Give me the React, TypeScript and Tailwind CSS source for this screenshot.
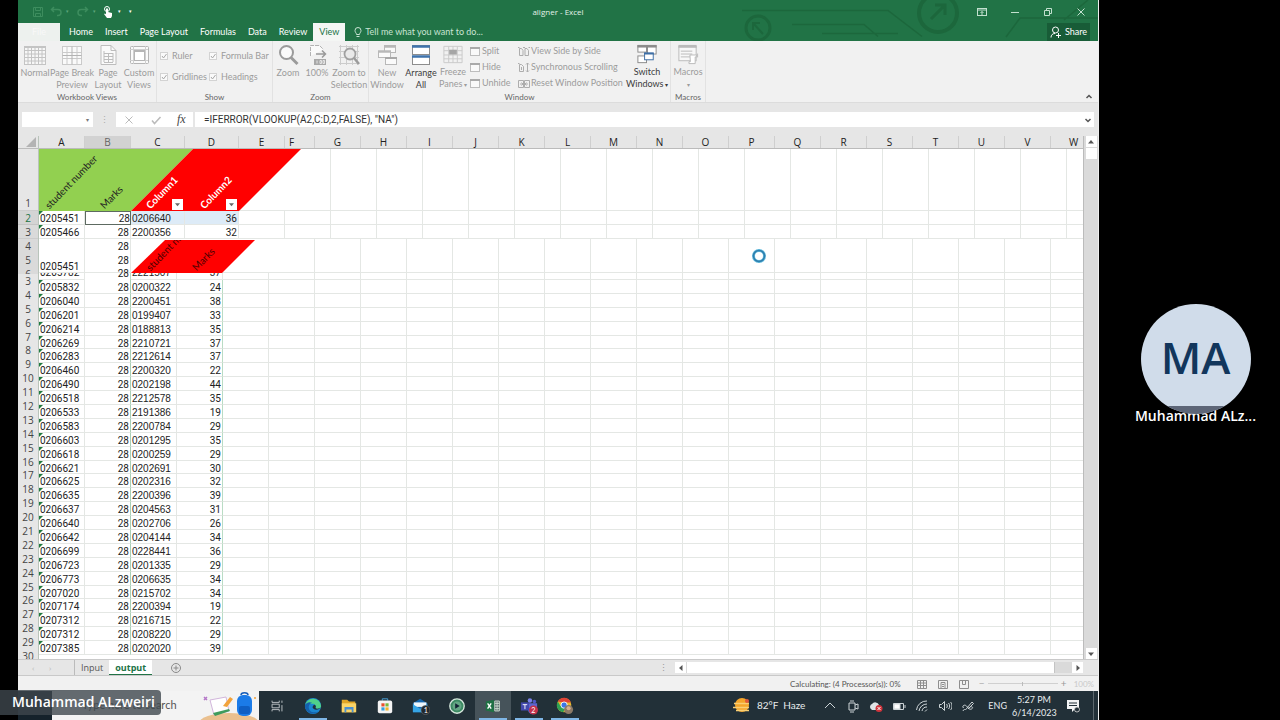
import React, { useState } from 'react';

const RIBBON_TABS = ['Home', 'Insert', 'Page Layout', 'Formulas', 'Data', 'Review', 'View'];

const COLUMNS = 'ABCDEFGHIJKLMNOPQRSTUVW'.split('');

// [student number, looked up mark, Column1, Column2]
const ROWS: [string, string, string, string][] = [
  ['0205832', '28', '0200322', '24'],
  ['0206040', '28', '2200451', '38'],
  ['0206201', '28', '0199407', '33'],
  ['0206214', '28', '0188813', '35'],
  ['0206269', '28', '2210721', '37'],
  ['0206283', '28', '2212614', '37'],
  ['0206460', '28', '2200320', '22'],
  ['0206490', '28', '0202198', '44'],
  ['0206518', '28', '2212578', '35'],
  ['0206533', '28', '2191386', '19'],
  ['0206583', '28', '2200784', '29'],
  ['0206603', '28', '0201295', '35'],
  ['0206618', '28', '0200259', '29'],
  ['0206621', '28', '0202691', '30'],
  ['0206625', '28', '0202316', '32'],
  ['0206635', '28', '2200396', '39'],
  ['0206637', '28', '0204563', '31'],
  ['0206640', '28', '0202706', '26'],
  ['0206642', '28', '0204144', '34'],
  ['0206699', '28', '0228441', '36'],
  ['0206723', '28', '0201335', '29'],
  ['0206773', '28', '0206635', '34'],
  ['0207020', '28', '0215702', '34'],
  ['0207174', '28', '2200394', '19'],
  ['0207312', '28', '0216715', '22'],
  ['0207312', '28', '0208220', '29'],
  ['0207385', '28', '0202020', '39'],
];

const CELL = 'shrink-0 overflow-hidden border-r border-b border-[#e4e7e4] px-px';

const headWidth = (i: number) => {
  if (i === 2 || i === 3) return 'w-[54px]';
  if (i === 5) return 'w-[30px]';
  return 'w-[46px]';
};

const Blank: React.FC<{ count: number }> = ({ count }) => (
  <>
    {Array.from({ length: count }, (_, i) => (
      <td key={i} className={`${CELL} w-[46px]`} />
    ))}
  </>
);

const ErrorMark = () => (
  <svg viewBox="0 0 4 4" className="absolute left-0 top-0 size-1"><path d="M0 0h4L0 4z" fill="#1f7a3f" /></svg>
);

/* ---------- ribbon drawings ---------- */

const Svg: React.FC<{ className?: string; box?: string; children: React.ReactNode }> = ({ className = 'w-6 h-6', box = '0 0 24 24', children }) => (
  <svg viewBox={box} className={className} fill="none" stroke="currentColor" strokeWidth="1">{children}</svg>
);

const NormalIcon = () => (
  <Svg className="w-6 h-6 text-[#c4c4c4]">
    <rect x="1.5" y="3.5" width="21" height="18" fill="#f7f7f7" />
    <path d="M1.5 7.5h21M1.5 11h21M1.5 14.500h21M1.500 18h21M5 3.500v18M8.500 3.500v18M12 3.500v18M15.500 3.500v18M19 3.500v18" />
    <path d="M1 4h22" strokeWidth="2" />
  </Svg>
);

const PageBreakIcon = () => (
  <Svg className="w-6 h-6 text-[#cacaca]">
    <rect x="2.5" y="3.5" width="19" height="18" fill="#fafafa" />
    <path d="M2.5 9.500h19M2.500 15.500h19M7 3.500v18M17 3.500v18" />
    <path d="M12 3.500v18M2.500 12.500h19" stroke="#b4b4b4" />
  </Svg>
);

const PageLayoutIcon = () => (
  <Svg className="w-6 h-6 text-[#bdbdbd]">
    <path d="M5 2.500h10l5 5v14H5z" fill="#fafafa" />
    <path d="M15 2.500v5h5M8 10.500h9M8 13.500h9M8 16.500h9M8 8v11M12.500 10v9M17 10v9M8 19.500h9" />
  </Svg>
);

const CustomViewsIcon = () => (
  <Svg className="w-6 h-6 text-[#b5b5b5]">
    <rect x="3.500" y="3.500" width="18" height="17" rx="1" fill="#fafafa" />
    <path d="M6.500 3v18M18.500 3v18M3 6.500h18M3 17.500h18" stroke="#cfcfcf" />
    <rect x="7.500" y="7.500" width="10" height="10" fill="#fff" />
    <path d="M7 8h11" strokeWidth="2" />
  </Svg>
);

const ZoomIcon = () => (
  <Svg className="w-6 h-6 text-[#9b9b9b]">
    <circle cx="10.500" cy="9.500" r="6.500" strokeWidth="2" fill="#fafafa" />
    <path d="M15 14.500l6.500 6.500" strokeWidth="3" />
  </Svg>
);

const HundredIcon = () => (
  <Svg className="w-6 h-6 text-[#b2b2b2]">
    <path d="M5.500 13V2.500h9l4 4" fill="#fafafa" strokeDasharray="4 1" />
    <path d="M11 11h9M17 7.500l3.500 3.500L17 14.500" stroke="#999" strokeWidth="1.500" />
    <rect x="9" y="16" width="12" height="6" fill="#a8a8a8" stroke="none" />
    <path d="M12 17.500v3M15 17.500h1.500v3H15zM18 17.500h1.500v3H18z" stroke="#f2f2f2" strokeWidth=".8" />
  </Svg>
);

const ZoomSelIcon = () => (
  <Svg className="w-6 h-6 text-[#cccccc]">
    <path d="M2 3.500h20M2 8.500h20M2 14.500h20M2 20.500h20M3.500 2v20M9.500 2v20M15.500 2v20M20.500 2v20" />
    <circle cx="13" cy="11" r="5.500" stroke="#a0a0a0" strokeWidth="1.800" fill="#e9e9e9" />
    <path d="M17 15l5 6" stroke="#9b9b9b" strokeWidth="2.500" />
  </Svg>
);

const NewWindowIcon = () => (
  <Svg className="w-6 h-6 text-[#b8b8b8]">
    <rect x="9.500" y="2.500" width="11" height="7" fill="#fafafa" />
    <path d="M9 3.500h12" strokeWidth="2.500" />
    <rect x="3.500" y="8.500" width="12" height="6" fill="#fafafa" />
    <path d="M3 8.500h13" strokeWidth="2.500" />
    <rect x="10.500" y="14.500" width="11" height="7" fill="#fafafa" />
    <path d="M10 15h12" strokeWidth="2" stroke="#a8a8a8" />
  </Svg>
);

const SwitchIcon = () => (
  <Svg className="w-6 h-6 text-[#8b8b8b]">
    <rect x="12.500" y="2.500" width="9" height="9" fill="#fff" />
    <rect x="2.500" y="2.500" width="9" height="7" fill="#fff" />
    <path d="M2 3.500h20" strokeWidth="2.500" />
    <rect x="2.500" y="13.500" width="9" height="7" fill="#fff" />
    <rect x="9.500" y="10.500" width="9" height="7" fill="#fff" stroke="#3d6ea5" />
    <path d="M9 11h10" strokeWidth="2" stroke="#3d6ea5" />
  </Svg>
);

const ArrangeIcon = () => (
  <Svg className="w-6 h-6 text-[#8d8d8d]">
    <rect x="3.500" y="2.500" width="17" height="9" fill="#fff" />
    <rect x="3.500" y="13.500" width="17" height="8" fill="#fff" />
    <path d="M3 3.500h18M3 13.500h18" stroke="#3f73ac" strokeWidth="2.500" />
  </Svg>
);

const FreezeIcon = () => (
  <Svg className="w-6 h-6 text-[#cacaca]">
    <path d="M2.500 3.500h19v17h-19zM2.500 8h19M2.500 12.500h19M2.500 16.500h19M7.500 3.500v17M16.500 3.500v17M12 3.500v17" />
    <rect x="8" y="7" width="8" height="5" fill="#a5a5a5" stroke="none" />
  </Svg>
);

const MacrosIcon = () => (
  <Svg className="w-6 h-6 text-[#bababa]">
    <rect x="2.500" y="3.500" width="18" height="15" fill="#f8f8f8" />
    <path d="M2 3.500h19" strokeWidth="3" />
    <path d="M4.500 8.500h12M4.500 11.500h12M4.500 14.500h12" />
    <path d="M14 12.500h7v2h-1.500v7H13v-2h1.500z" fill="#fff" />
    <path d="M22 11v4" />
  </Svg>
);

const PaneIcon = () => (
  <Svg className="h-[11px] w-3 text-[#bdbdbd]" box="0 0 12 11">
    <rect x="1.500" y="1.500" width="9" height="8" fill="#f9f9f9" />
    <path d="M1 2h10" strokeWidth="2" stroke="#a9a9a9" />
  </Svg>
);

const SideIcon = () => (
  <Svg className="h-[11px] w-3 text-[#adadad]" box="0 0 12 11">
    <path d="M0 1.500h1.500M1.500 2.500h2l1.500 2v5H1.500zM7 2.500h2l1.500 2v5H7zM5 1.500h2M10.500 1.500H12" />
  </Svg>
);

const SyncIcon = () => (
  <Svg className="h-[11px] w-3 text-[#adadad]" box="0 0 12 11">
    <path d="M0 1.500h1.500M1.500 2.500h2l2 2v5h-4zM3.500 5v3M9.500 1v9M8 2.500L9.500 1 11 2.500M8 8.500L9.500 10 11 8.500" />
  </Svg>
);

const ResetIcon = () => (
  <Svg className="h-[11px] w-3 text-[#adadad]" box="0 0 12 11">
    <path d="M.5 2.500h5v7h-5zM6.500 2.500h5v7h-5zM2 6h3M3.500 4.500L5 6 3.500 7.500M10 6H7M8.500 4.500L7 6l1.500 1.500" />
  </Svg>
);

const BigButton: React.FC<{ icon: React.ReactNode; lines: string[]; width: string; active?: boolean; arrow?: boolean }> = ({ icon, lines, width, active, arrow }) => (
  <button className={`${width} flex shrink-0 flex-col items-center text-[9px] leading-[12px] whitespace-nowrap ${active ? 'text-[#3c3c3c]' : 'text-[#9c9c9c]'}`}>
    {icon}
    {lines.map((l, i) => (
      <span key={l}>
        {l}
        {arrow && i === lines.length - 1 && <span className="text-[6px]"> ▾</span>}
      </span>
    ))}
  </button>
);

const SmallButton: React.FC<{ icon: React.ReactNode; label: string }> = ({ icon, label }) => (
  <button className="flex h-4 items-center gap-px text-[9px] whitespace-nowrap text-[#9c9c9c]">{icon}{label}</button>
);

const Group: React.FC<{ title: string; width: string; children: React.ReactNode }> = ({ title, width, children }) => (
  <section className={`${width} flex shrink-0 flex-col border-r border-[#e2e2e2]`}>
    <div className="flex h-[50px] shrink-0 pt-[2px]">{children}</div>
    <h2 className="shrink-0 text-center text-[8px] leading-[13px] text-[#666]">{title}</h2>
  </section>
);

const Tick: React.FC<{ label: string }> = ({ label }) => (
  <label className="flex h-[21px] items-center gap-1 text-[9px] whitespace-nowrap text-[#9c9c9c]">
    <span className="relative flex size-2">
      <input type="checkbox" defaultChecked className="size-2 appearance-none border border-[#d3d3d3] bg-[#fafafa]" />
      <svg viewBox="0 0 8 8" className="pointer-events-none absolute inset-0 size-2" fill="none" stroke="#a8a8a8"><path d="M2 4l1.500 2L6.500 2" /></svg>
    </span>
    {label}
  </label>
);

const TitleBar = () => (
  <div className="relative flex h-[23px] items-center text-[#5ea67b]">
    <div className="flex flex-1 items-center pl-[11px]">
      <button aria-label="Save" className="w-[21px] pl-[3px]"><Svg className="size-3 text-[#3d8d5e]" box="0 0 12 12"><path d="M1.500 1.500h9v9h-9zM3.500 1.500v3h5v-3M3.500 10.500v-3h5v3" /></Svg></button>
      <button aria-label="Undo" className="flex w-[27px] items-center gap-1"><Svg className="size-3 text-[#3d8d5e]" box="0 0 12 12"><path d="M4 1L1.500 3.500 4 6M1.500 3.500H8a3 3 0 010 6H7" strokeWidth="1.500" /></Svg><span className="text-[5px]">▾</span></button>
      <button aria-label="Redo" className="flex w-[25px] items-center gap-1"><Svg className="size-3 text-[#3d8d5e]" box="0 0 12 12"><path d="M8 1l2.500 2.500L8 6M10.500 3.500H4a3 3 0 000 6h1" strokeWidth="1.500" /></Svg><span className="text-[5px]">▾</span></button>
      <button aria-label="Touch mode" className="flex w-[27px] items-center gap-1 text-white">
        <svg viewBox="0 0 12 12" className="size-3" fill="currentColor"><circle cx="5" cy="3" r="2.500" fill="none" stroke="currentColor" /><path d="M4 2.500h2V6l4 1v3l-1 2H5L2 8l1-.5 1 .8z" /></svg>
        <span className="text-[5px]">▾</span>
      </button>
      <button aria-label="Customize" className="text-[5px] text-white">▾</button>
    </div>
    <h1 className="font-['Open_Sans',sans-serif] text-[8px] text-[#e4f2e9]">aligner - Excel</h1>
    <div className="flex flex-1 items-center justify-end gap-[21px] pr-[11px] text-[#c3e0cf]">
      <button aria-label="Ribbon options"><Svg className="size-3" box="0 0 12 12"><rect x="1.500" y="2.500" width="9" height="7" /><path d="M1 4h10M6 9V5.500M4.500 7L6 5.500 7.500 7" /></Svg></button>
      <button aria-label="Minimize"><Svg className="size-3" box="0 0 12 12"><path d="M2 6.500h8" /></Svg></button>
      <button aria-label="Restore"><Svg className="size-3" box="0 0 12 12"><path d="M2.500 4.500h5v5h-5zM4.500 4V2.500h5v5H8" /></Svg></button>
      <button aria-label="Close"><Svg className="size-3" box="0 0 12 12"><path d="M2.500 2.500l7 7M9.500 2.500l-7 7" /></Svg></button>
    </div>
  </div>
);

const TabBar: React.FC<{ tab: string; setTab: (t: string) => void }> = ({ tab, setTab }) => (
  <nav className="relative flex h-[18px] items-stretch text-[9px] whitespace-nowrap text-white">
    <button className="mr-[3px] w-[42px] bg-[#edf1ee] text-[#f8f8f8]">File</button>
    {RIBBON_TABS.map(t => (
      <button key={t} onClick={() => setTab(t)} className={t === tab ? 'bg-[#f4f6f4] px-[6px] text-[#217346]' : 'px-[6px]'}>{t}</button>
    ))}
    <label className="flex flex-1 items-center gap-[2px] pl-2 text-[#c9e3d3]">
      <Svg className="h-3 w-[10px]" box="0 0 10 12"><path d="M3.500 8.500C3.500 7 2 6.500 2 4.500a3 3 0 016 0c0 2-1.500 2.500-1.500 4zM3.500 10.500h3" /></Svg>
      <input className="w-40 bg-transparent outline-none placeholder:text-[#c9e3d3]" placeholder="Tell me what you want to do..." />
    </label>
    <button className="mr-2 flex w-[43px] items-center justify-center gap-1 bg-[#185c37]">
      <Svg className="h-3 w-[11px]" box="0 0 11 12"><circle cx="5.500" cy="4" r="3" /><path d="M1 11.500c0-2.500 1.500-4 4-4M6 9.500h5M8.500 7v5" /></Svg>
      Share
    </button>
  </nav>
);

// faint circuit pattern of the title area
const Circuit = () => (
  <svg viewBox="0 0 360 41" className="absolute right-0 top-0 h-[41px] w-[360px]" fill="none" stroke="#1c673c" strokeWidth="1.500">
    <path d="M4 10.500h146l34 26M54 24.500h72l14 12M84 33.500h76M268 37l14-19h78M326 20L350 0" />
    <circle cx="20" cy="28" r="12" strokeWidth="3" />
    <path d="M25 34L15 23M15 30v-7h7" strokeWidth="2" />
    <circle cx="200" cy="13" r="19" strokeWidth="4" />
    <path d="M193 19l14-14M197 5h10v10" strokeWidth="3" />
  </svg>
);

const Ribbon = () => (
  <div className="relative flex h-[62px] border-b border-[#dcdcdc] bg-[#f1f1f1]">
    <Group title="Workbook Views" width="w-[139px]">
      <BigButton icon={<NormalIcon />} lines={['Normal']} width="w-[34px]" />
      <BigButton icon={<PageBreakIcon />} lines={['Page Break', 'Preview']} width="w-10" />
      <BigButton icon={<PageLayoutIcon />} lines={['Page', 'Layout']} width="w-8" />
      <BigButton icon={<CustomViewsIcon />} lines={['Custom', 'Views']} width="w-[30px]" />
    </Group>
    <Group title="Show" width="w-[116px]">
      <div className="flex gap-[2px] pt-[2px] pl-[3px]">
        <div><Tick label="Ruler" /><Tick label="Gridlines" /></div>
        <div><Tick label="Formula Bar" /><Tick label="Headings" /></div>
      </div>
    </Group>
    <Group title="Zoom" width="w-[96px]">
      <BigButton icon={<ZoomIcon />} lines={['Zoom']} width="w-[30px]" />
      <BigButton icon={<HundredIcon />} lines={['100%']} width="w-7" />
      <BigButton icon={<ZoomSelIcon />} lines={['Zoom to', 'Selection']} width="w-9" />
    </Group>
    <Group title="Window" width="w-[302px]">
      <BigButton icon={<NewWindowIcon />} lines={['New', 'Window']} width="w-9" />
      <BigButton icon={<ArrangeIcon />} lines={['Arrange', 'All']} width="w-8" active />
      <BigButton icon={<FreezeIcon />} lines={['Freeze', 'Panes']} width="w-8" arrow />
      <div className="w-[49px] shrink-0">
        <SmallButton icon={<PaneIcon />} label="Split" />
        <SmallButton icon={<PaneIcon />} label="Hide" />
        <SmallButton icon={<PaneIcon />} label="Unhide" />
      </div>
      <div className="w-[108px] shrink-0">
        <SmallButton icon={<SideIcon />} label="View Side by Side" />
        <SmallButton icon={<SyncIcon />} label="Synchronous Scrolling" />
        <SmallButton icon={<ResetIcon />} label="Reset Window Position" />
      </div>
      <BigButton icon={<SwitchIcon />} lines={['Switch', 'Windows']} width="w-[42px]" active arrow />
    </Group>
    <Group title="Macros" width="w-[35px]">
      <BigButton icon={<MacrosIcon />} lines={['Macros', '']} width="w-[34px]" arrow />
    </Group>
    <div className="flex flex-1 items-end justify-end pr-[5px] pb-px">
      <button aria-label="Collapse ribbon"><Svg className="size-2 text-[#555]" box="0 0 8 8"><path d="M1.500 5L4 2.500 6.500 5" strokeWidth="1.500" /></Svg></button>
    </div>
  </div>
);

const FormulaBar: React.FC<{ formula: string; setFormula: (f: string) => void }> = ({ formula, setFormula }) => (
  <div className="flex bg-[#e6e6e6] pt-[9px] pr-1 pb-[9px] pl-1">
    <button aria-label="Name box" className="h-[15px] w-[71px] bg-white pr-1 text-right text-[6px] text-[#777]">▾</button>
    <span className="w-[23px] text-center text-[9px] leading-[15px] text-[#aaa]">⋮</span>
    <div className="flex h-[15px] w-[77px] items-center justify-around bg-white text-[#bbb]">
      <button aria-label="Cancel"><Svg className="size-3" box="0 0 12 12"><path d="M2.500 2.500l7 7M9.500 2.500l-7 7" /></Svg></button>
      <button aria-label="Enter"><Svg className="size-3" box="0 0 12 12"><path d="M2 6.500L4.500 9.500 10.500 3" strokeWidth="1.500" /></Svg></button>
      <button className="font-['Liberation_Serif',serif] text-[12px] leading-[15px] text-[#444] italic">fx</button>
    </div>
    <input aria-label="Formula" value={formula} onChange={e => setFormula(e.target.value)} className="ml-[2px] h-[15px] min-w-0 flex-1 bg-white px-[9px] font-['Roboto',sans-serif] text-[10px] text-[#333] outline-none" />
    <button aria-label="Expand formula bar" className="flex h-[15px] items-center bg-white pr-[2px]"><Svg className="size-2 text-[#555]" box="0 0 8 8"><path d="M1.500 3L4 5.500 6.500 3" strokeWidth="1.500" /></Svg></button>
  </div>
);

const GUTTER_ROW = 'h-[14px] shrink-0 leading-[14px]';

const Gutter = () => (
  <div className="flex w-[21px] shrink-0 flex-col overflow-hidden border-r border-[#b9c4bb] bg-[#e6e6e6] text-center font-['Open_Sans',sans-serif] text-[10px] text-[#444]">
    <div className="flex h-[13px] shrink-0 justify-end border-b border-[#bbb] pr-px"><svg viewBox="0 0 12 12" className="size-3"><path d="M11 1v10H1z" fill="#b3b3b3" /></svg></div>
    <div className="flex h-[62px] shrink-0 items-end justify-center border-b border-[#ccc] leading-[14px]">1</div>
    <div className={`${GUTTER_ROW} border-b border-[#c4c4c4] bg-[#d4d4d4] text-[#217346]`}>2</div>
    <div className={`${GUTTER_ROW} border-b border-[#ccc] bg-[#dadada]`}>3</div>
    <div className={`${GUTTER_ROW} bg-[#dadada]`}>4</div>
    <div className={`${GUTTER_ROW} bg-[#dadada]`}>5</div>
    <div className="h-[7px] shrink-0 overflow-hidden bg-[#dadada] leading-[14px]">6</div>
    <ol className="flex h-[389px] shrink-0 flex-col">
      {Array.from({ length: 28 }, (_, i) => (
        <li key={i} className="min-h-0 flex-1 leading-[14px]">{i + 3}</li>
      ))}
    </ol>
  </div>
);

const Filter = () => (
  <button aria-label="Filter" className="absolute right-[2px] bottom-px flex size-[11px] items-center justify-center bg-white">
    <svg viewBox="0 0 6 4" className="h-1 w-[5px]"><path d="M0 0h6L3 3.500z" fill="#666" /></svg>
  </button>
);

const SLANT = 'absolute bottom-0 origin-bottom-left -rotate-46 text-[10px] leading-[12px] whitespace-nowrap';

const Sheet = () => (
  <div className="relative min-w-0 flex-1 overflow-hidden bg-white">
    <table className="flex flex-col font-['Roboto',sans-serif] text-[10px] leading-[16px] text-[#222]">
      <thead className="flex flex-col font-['Open_Sans',sans-serif]">
        <tr className="flex h-[13px] border-b border-[#bbb] bg-[#e6e6e6]">
          {COLUMNS.map((c, i) => (
            <th key={c} className={`${headWidth(i)} shrink-0 border-r border-[#cfcfcf] leading-[13px] font-normal ${c === 'B' ? 'bg-[#d2d2d2] text-[#666]' : ''} ${c === 'F' ? 'pr-4' : ''}`}>{c}</th>
          ))}
        </tr>
        <tr className="relative flex h-[62px] font-['Lato',sans-serif]">
          <th className="relative w-[46px] shrink-0 font-normal"><span className={`${SLANT} left-3 z-10`}>student number</span></th>
          <th className="relative w-[46px] shrink-0 font-normal"><span className={`${SLANT} left-[21px] z-10`}>Marks</span></th>
          <th className="relative z-10 w-[54px] shrink-0 font-bold text-white"><span className={`${SLANT} left-[21px]`}>Column1</span><Filter /></th>
          <th className="relative z-10 w-[54px] shrink-0 font-bold text-white"><span className={`${SLANT} left-[21px]`}>Column2</span><Filter /></th>
          <td className="w-[46px] shrink-0 border-b border-[#e4e7e4]" />
          <Blank count={18} />
          <td className="absolute top-0 left-0 h-[62px] w-[262px] p-0">
            <svg viewBox="0 0 262 62" className="h-[62px] w-[262px]">
              <path d="M0 0h154L92 62H0z" fill="#92d050" />
              <path d="M154 0h108l-62 62H92z" fill="#f00" />
            </svg>
          </td>
        </tr>
      </thead>
      <tbody className="flex flex-col">
        <tr className="flex h-[14px]">
          <td className={`${CELL} relative w-[46px]`}><ErrorMark />0205451</td>
          <td className="w-[46px] shrink-0 border border-[#5d6a61] text-right leading-[13px]">28</td>
          <td className={`${CELL} w-[54px] bg-[#ddebf7] font-['Liberation_Sans',sans-serif]`}>0206640</td>
          <td className={`${CELL} w-[54px] bg-[#ddebf7] text-right`}>36</td>
          <Blank count={19} />
        </tr>
        <tr className="flex h-[14px]">
          <td className={`${CELL} relative w-[46px]`}><ErrorMark />0205466</td>
          <td className={`${CELL} w-[46px] text-right`}>28</td>
          <td className={`${CELL} w-[54px] font-['Liberation_Sans',sans-serif]`}>2200356</td>
          <td className={`${CELL} w-[54px] text-right`}>32</td>
          <Blank count={19} />
        </tr>
        <tr className="relative flex h-[34px]">
          <td className={`${CELL} flex w-[46px] items-end leading-[10px]`}>0205451</td>
          <td className={`${CELL} w-[46px] pt-px text-right leading-[14px]`}>28<br />28</td>
          <td className="relative w-[54px] shrink-0 p-0">
            <div className="absolute top-px left-0 h-[33px] w-[130px] overflow-hidden font-['Lato',sans-serif]">
              <svg viewBox="0 0 130 33" className="absolute top-0 left-0 h-[33px] w-[130px]"><path d="M34 0h90L91 33H0z" fill="#f00" /></svg>
              <span className={`${SLANT} left-[21px] text-[#4a0000]`}>student number</span>
              <span className={`${SLANT} left-[67px] text-[#4a0000]`}>Marks</span>
            </div>
          </td>
          <td colSpan={3} className={`${CELL} w-[130px]`} />
          <Blank count={17} />
        </tr>
        <tr className="flex h-[7px] leading-[12px]">
          <td className={`${CELL} flex w-[46px] items-end`}>0205782</td>
          <td className="z-10 flex w-[46px] shrink-0 items-end justify-end border-r border-[#b9d9c4] pr-px">28</td>
          <td className={`${CELL} flex w-[46px] items-end font-['Liberation_Sans',sans-serif]`}>2221507</td>
          <td className={`${CELL} flex w-[46px] items-end justify-end`}>37</td>
          <Blank count={19} />
        </tr>
      </tbody>
      <tbody className="flex h-[375px] flex-col">
        {ROWS.map(([num, mark, c1, c2], i) => (
          <tr key={i} className="flex min-h-0 flex-1">
            <td className={`${CELL} relative w-[46px]`}><ErrorMark />{num}</td>
            <td className="w-[46px] shrink-0 border-r border-b border-[#e4e7e4] border-r-[#a9cfb6] pr-px text-right">{mark}</td>
            <td className={`${CELL} w-[46px] font-['Liberation_Sans',sans-serif]`}>{c1}</td>
            <td className={`${CELL} w-[46px] border-r-[#b9dcc4] text-right`}>{c2}</td>
            <Blank count={19} />
          </tr>
        ))}
      </tbody>
    </table>
    <svg viewBox="0 0 16 16" className="absolute top-[112px] left-[712px] size-4" fill="none"><circle cx="8" cy="8" r="5.500" stroke="#5fb9dc" strokeWidth="3" /><circle cx="8" cy="8" r="5.500" stroke="#2f7fae" strokeWidth="1.500" /></svg>
  </div>
);

const ScrollArrow: React.FC<{ label: string; d: string }> = ({ label, d }) => (
  <button aria-label={label} className="flex size-[11px] shrink-0 items-center justify-center bg-white"><svg viewBox="0 0 8 8" className="size-2"><path d={d} fill="#555" /></svg></button>
);

const SheetTabs: React.FC<{ sheet: string; setSheet: (s: string) => void }> = ({ sheet, setSheet }) => (
  <div className="flex h-[17px] items-center border-t border-b border-[#c9c9c9] bg-[#e6e6e6] pr-[15px] font-['Open_Sans',sans-serif] text-[9px]">
    <span className="w-14 pl-[14px] text-[8px] text-[#bbb]">‹ &nbsp; &nbsp; &nbsp; ›</span>
    <nav className="flex h-[15px] flex-1 items-center">
      {['Input', 'output'].map(s => (
        <button key={s} onClick={() => setSheet(s)} className={s === sheet ? 'h-[15px] border-b border-[#217346] bg-white px-[6px] leading-[13px] font-bold text-[#217346]' : 'h-[15px] border-l border-[#bbb] px-[6px] leading-[13px] text-[#555]'}>{s}</button>
      ))}
      <button aria-label="New sheet" className="ml-[18px]"><Svg className="size-3 text-[#8a8a8a]" box="0 0 12 12"><circle cx="6" cy="6" r="4.500" /><path d="M3.500 6h5M6 3.500v5" /></Svg></button>
    </nav>
    <span className="pr-[7px] text-[9px] text-[#999]">⋮</span>
    <ScrollArrow label="Scroll left" d="M5.500 1v6L2 4z" />
    <div className="flex h-[11px] w-[386px] bg-[#dadada] pl-px"><div className="w-[368px] border-r border-[#c4c4c4] bg-white" /></div>
    <ScrollArrow label="Scroll right" d="M2.500 1v6L6 4z" />
  </div>
);

const StatusBar = () => (
  <div className="flex h-[15px] items-center justify-end bg-[#f1f1f1] pr-1 text-[8px] whitespace-nowrap text-[#555]">
    <span className="mr-[15px]">Calculating: (4 Processor(s)): 0%</span>
    <div className="flex gap-[9px] text-[#8e8e8e]">
      <button aria-label="Normal view"><Svg className="size-3" box="0 0 12 12"><path d="M1.500 2.500h9v8h-9zM1.500 5h9M1.500 7.500h9M4.500 2.500v8M7.500 2.500v8" /></Svg></button>
      <button aria-label="Page layout view"><Svg className="size-3" box="0 0 12 12"><path d="M1.500 2.500h9v8h-9zM4 4.500h4v6H4zM5 6.500h2M5 8.500h2" /></Svg></button>
      <button aria-label="Page break view"><Svg className="size-3" box="0 0 12 12"><path d="M1.500 2.500h9v8h-9zM4.500 2.500v4M7.500 2.500v4h-3" /></Svg></button>
    </div>
    <span className="ml-[6px] w-3 text-center text-[10px] text-[#aaa]">−</span>
    <input type="range" aria-label="Zoom" className="h-px w-[70px] appearance-none bg-[#d0d0d0] [&::-webkit-slider-thumb]:h-1 [&::-webkit-slider-thumb]:w-px [&::-webkit-slider-thumb]:appearance-none [&::-webkit-slider-thumb]:bg-[#bbb]" />
    <span className="w-3 text-center text-[10px] text-[#999]">+</span>
    <span className="pl-1 text-[#c9c9c9]">100%</span>
  </div>
);

const APPS: { name: string; bar?: boolean; active?: boolean; art: React.ReactNode }[] = [
  { name: 'Task view', art: <g fill="none" stroke="#c5cbce" strokeWidth="1"><path d="M4.500 4v2h8V4M4.500 16v-2h8v2M4.500 8h8v4h-8zM15.500 4v2.500M15.500 9v7" /></g> },
  { name: 'Edge', bar: true, art: <g><circle cx="10" cy="10" r="9" fill="#1b86d0" /><path d="M1.500 8A9 9 0 0119 10c0 3-4 4-6 2.500 1-3-1-5-4-5S3 8.500 1.500 8z" fill="#4fd08a" /><path d="M1 10c1-4 5-5 8-3.500-4 1-5 6-2 9 2 2 6 2 9 .5A9 9 0 011 10z" fill="#1560ac" /><path d="M12 8.500c2 1.500 1 3 .5 3.500 1.500 2 5 1 6-.5-1 3-8 4-9 0 0-1 1-3 2.500-3z" fill="#22303a" /></g> },
  { name: 'File Explorer', art: <g><path d="M2 3h6l2 2h7v12H2z" fill="#e0a526" /><rect x="2" y="7" width="16" height="10" fill="#fad467" /><path d="M5 11h10v6h-2v-3H7v3H5z" fill="#4a90d0" /></g> },
  { name: 'Store', art: <g><path d="M7 4V2h6v2" fill="none" stroke="#4aa6e0" /><rect x="2" y="4" width="16" height="14" rx="2" fill="#f4f4f4" /><path d="M6 7h3.500v3.500H6z" fill="#e8502f" /><path d="M10.500 7H14v3.500h-3.500z" fill="#7ab83c" /><path d="M6 11.500h3.500V15H6z" fill="#34a0e0" /><path d="M10.500 11.500H14V15h-3.500z" fill="#f4b52c" /></g> },
  { name: 'Mail', art: <g><path d="M1 7l8-5 8 5v10H1z" fill="#1668b0" /><path d="M2 6h14v5H2z" fill="#eef6fc" /><path d="M1 8l8 5 8-5v9H1z" fill="#36a5e6" /><circle cx="15" cy="14.500" r="5" fill="#23282d" stroke="#777" strokeWidth=".6" /><text x="13" y="17.500" fontSize="8" fill="#fff">1</text></g> },
  { name: 'Player', art: <g><circle cx="10" cy="10" r="8" fill="#3c8a63" stroke="#d7e8de" strokeWidth="1.500" /><circle cx="10" cy="10" r="5" fill="#64a684" /><path d="M8 7l5 3-5 3z" fill="#123" /></g> },
  { name: 'Excel', bar: true, active: true, art: <g><path d="M2 5l9-2v14l-9-2z" fill="#1f7244" /><path d="M4 7l4 6M8 7l-4 6" stroke="#fff" strokeWidth="1.500" /><path d="M12 4.500h5v11h-5zM12 7h5M12 10h5M12 13h5M14.500 5v10" fill="none" stroke="#d6ead9" /></g> },
  { name: 'Teams', bar: true, art: <g><circle cx="11" cy="4" r="2.500" fill="#7b83eb" /><circle cx="16" cy="5" r="2" fill="#5059c9" /><path d="M7 7h12v6a5 5 0 01-10 2z" fill="#5d65cf" /><rect x="1" y="6" width="9" height="9" fill="#4349ae" /><path d="M3 8.500h5M5.500 8.500v5" stroke="#fff" /><circle cx="15" cy="14.500" r="5" fill="#c4314b" /><text x="12.500" y="17.500" fontSize="8" fill="#fff">2</text></g> },
  { name: 'Chrome', bar: true, art: <g><circle cx="9" cy="9" r="8" fill="#e8b92a" /><path d="M2 5a8 8 0 006 12l3-6-6-1z" fill="#2fa055" /><path d="M2 5a8 8 0 0114.500 1H9z" fill="#e04336" /><circle cx="9" cy="9" r="3.500" fill="#3b78e7" stroke="#fff" strokeWidth="1" /><circle cx="14" cy="14" r="5" fill="#8d7a67" /><circle cx="14" cy="12.500" r="2.300" fill="#d9b08c" /></g> },
];

const TRAY: { name: string; art: React.ReactNode }[] = [
  { name: 'Show hidden icons', art: <path d="M2 9l5-5 5 5" /> },
  { name: 'Meet now', art: <path d="M3 4h6v7H3zM9 6l3-1v5l-3-1M4 2h4M4 13h4" /> },
  { name: 'OneDrive', art: <g stroke="none"><path d="M2 10a3 3 0 011-5 4 4 0 017 1v5H3z" fill="#dfe4e6" /><circle cx="10" cy="9.500" r="3.500" fill="#d0343c" /><path d="M8.500 8l3 3M11.500 8l-3 3" stroke="#fff" /></g> },
  { name: 'Battery', art: <g><path d="M1.500 4.500h10v6h-10zM13 6v3" /><path d="M2 5h6v5H2z" fill="#fff" /></g> },
  { name: 'Network', art: <path d="M1.500 11A10 10 0 0112 2M4 12a8 8 0 018-7M7 12a5 5 0 015-4M10 12.500l2-2" /> },
  { name: 'Volume', art: <path d="M1.500 5.500h2l3-3v9l-3-3h-2zM8.500 5c1 1 1 3 0 4M10.500 4c1.500 1.500 1.500 4.500 0 6M12.500 3c2 2 2 6 0 8" /> },
  { name: 'Pen', art: <path d="M2 12c1-3 3 0 4-3M6 9l5-6 1.500 1.500L7 10M2.500 9c-2-2 1-4 3-2s3 4 5 3 1-3-1-2" /> },
];

const Taskbar = () => (
  <footer className="flex h-[29px] bg-[#223038] text-[9px] text-[#e8ecee]">
    <div className="flex w-[34px] bg-[#15222b]" />
    <label className="relative flex w-[207px] items-center overflow-hidden bg-[#f3f3f3]">
      <input className="w-full bg-transparent pl-[30px] text-[11px] text-[#555] outline-none placeholder:text-[#555]" placeholder="Type here to search" />
      <svg viewBox="0 0 60 29" className="absolute right-0 top-0 h-[29px] w-[60px]">
        <ellipse cx="30" cy="32" rx="30" ry="10" fill="#eac08f" />
        <path d="M11 9l16-3 3 14-15 4z" fill="#fff" stroke="#d2b6dc" />
        <path d="M14 22l16-4 1 2-15 5z" fill="#3f9c5c" />
        <path d="M24 15l7-9 3 2-6 8z" fill="#f2a33c" />
        <path d="M5 6l3 3M8 6L5 9" stroke="#b477c8" strokeWidth="1.500" />
        <rect x="38" y="4" width="15" height="21" rx="6" fill="#1b7be8" />
        <path d="M42 4c0-3 7-3 7 0" fill="none" stroke="#155cb8" strokeWidth="1.500" />
        <rect x="40" y="15" width="11" height="8" rx="2" fill="#0f5fc4" />
        <circle cx="56" cy="7" r="1" fill="#f2a33c" />
      </svg>
    </label>
    {APPS.map(a => (
      <button key={a.name} aria-label={a.name} className={`relative flex w-9 items-center justify-center ${a.active ? 'bg-[#46535a]' : ''}`}>
        <svg viewBox="0 0 20 20" className="size-[18px]">{a.art}</svg>
        {a.bar && <span className="absolute inset-x-1 bottom-0 h-[2px] bg-[#7fb6e6]" />}
      </button>
    ))}
    <div className="flex flex-1 items-center justify-end pr-[13px]">
      <button className="mr-[18px] flex items-center gap-[6px] text-[10px] whitespace-pre">
        <svg viewBox="0 0 18 18" className="size-[18px]"><circle cx="9" cy="8" r="7" fill="#f5a52a" /><path d="M1 6.500h15M0 10.500h16M3 13.500h13" stroke="#f9cf74" strokeWidth="1.500" /><circle cx="14" cy="4" r="2" fill="#e0583a" /></svg>
        82°F  Haze
      </button>
      <div className="flex gap-[9px]">
        {TRAY.map(t => (
          <button key={t.name} aria-label={t.name}><svg viewBox="0 0 14 14" className="size-[14px]" fill="none" stroke="#cdd4d7">{t.art}</svg></button>
        ))}
      </div>
      <span className="ml-[13px]">ENG</span>
      <time className="ml-[5px] w-11 text-center leading-[13px]">5:27 PM<br />6/14/2023</time>
      <button aria-label="Notifications" className="ml-[10px]"><svg viewBox="0 0 14 14" className="size-[14px]"><path d="M1 1h12v9H9l-3 3v-3H1z" fill="#f2f4f5" /><path d="M3 4h8M3 6.500h8" stroke="#223038" /><circle cx="11" cy="10.500" r="2.500" fill="#223038" stroke="#ddd" strokeWidth=".8" /></svg></button>
    </div>
    <div className="w-[5px] border-l border-[#5c676d]" />
  </footer>
);

const App: React.FC = () => {
  const [tab, setTab] = useState('View');
  const [sheet, setSheet] = useState('output');
  const [formula, setFormula] = useState('=IFERROR(VLOOKUP(A2,C:D,2,FALSE), "NA")');

  return (
    <div className="relative flex h-screen min-h-[720px] overflow-hidden bg-black pl-[18px] font-['Lato','Open_Sans',sans-serif]">
      <main className="flex min-w-0 flex-1 flex-col border-r border-[#eee] bg-[#e6e6e6]">
        <header className="relative bg-[#217346]">
          <Circuit />
          <TitleBar />
          <TabBar tab={tab} setTab={setTab} />
        </header>
        <Ribbon />
        <FormulaBar formula={formula} setFormula={setFormula} />
        <div className="flex min-h-0 flex-1 overflow-hidden">
          <Gutter />
          <Sheet />
          <div className="flex w-[15px] shrink-0 flex-col items-center border-l border-[#bbb] bg-[#dadada]">
            <ScrollArrow label="Scroll up" d="M1 5.500h6L4 2z" />
            <div className="mt-px h-[11px] w-[11px] bg-white" />
            <div className="flex-1" />
            <ScrollArrow label="Scroll down" d="M1 2.500h6L4 6z" />
          </div>
        </div>
        <SheetTabs sheet={sheet} setSheet={setSheet} />
        <StatusBar />
        <Taskbar />
      </main>

      <aside className="flex w-[181px] shrink-0 flex-col items-center justify-center pt-[10px] pl-3 font-['Open_Sans',sans-serif]">
        <div className="relative flex size-[110px] items-center justify-center overflow-hidden rounded-full bg-[#d0dcea] pb-1 text-[44px] font-semibold text-[#12365c]">
          MA
          <span className="absolute inset-x-0 bottom-0 h-[8px] bg-[#5d6678]" />
        </div>
        <p className="-mt-2 text-[14px] leading-[20px] font-semibold text-white">Muhammad ALz...</p>
      </aside>

      <div className="absolute bottom-[5px] left-0 h-[25px] rounded-r-sm bg-[#3f474d]/80 pr-[6px] pl-3 font-['Open_Sans',sans-serif] text-[14px] leading-[24px] font-semibold text-white">Muhammad ALzweiri</div>
    </div>
  );
};

export default App;
